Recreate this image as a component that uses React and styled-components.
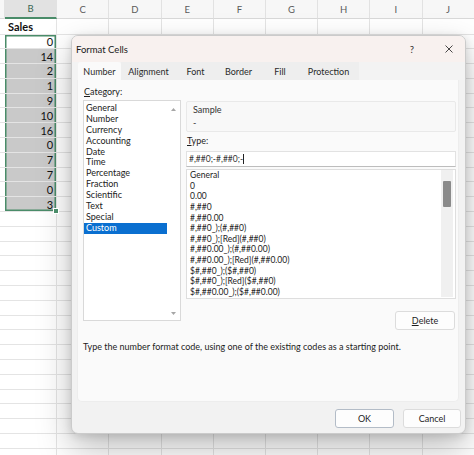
import React from "react";
import styled, { createGlobalStyle } from "styled-components";

const GlobalStyle = createGlobalStyle`
  html, body { margin: 0; padding: 0; background: #fff; }
  body { width: 474px; height: 455px; overflow: hidden; }
  #root { width: 474px; height: 455px; }
`;

const Screen = styled.div`
  position: relative;
  width: 474px;
  height: 455px;
  overflow: hidden;
  background: #fff;
  font-family: Lato, "Noto Sans", sans-serif;
`;

/* ---------- spreadsheet ---------- */
const Sheet = styled.div`
  display: flex;
  flex-direction: column;
`;

const SheetRow = styled.div`
  display: grid;
  grid-template-columns: 5px repeat(9, 52.2px);
  height: ${(p) => p.$h}px;
  flex: none;
`;

const HeaderCell = styled.div`
  box-sizing: border-box;
  display: flex;
  align-items: center;
  justify-content: center;
  background: ${(p) => (p.$active ? "#e2e2e2" : "#f7f7f7")};
  border-right: 1px solid #e2e2e2;
  border-bottom: ${(p) => (p.$active ? "2px solid #4a8c69" : "1px solid #d9d9d9")};
  color: ${(p) => (p.$active ? "#3a6652" : "#5a5a5a")};
  font-size: 9.5px;
`;

const selShadow = (p) => {
  if (!p.$sel) return "none";
  const c = "#4a8c69";
  const s = [`inset 1.5px 0 0 ${c}`, `inset -1.5px 0 0 ${c}`];
  if (p.$first) s.push(`inset 0 1.5px 0 ${c}`);
  if (p.$last) s.push(`inset 0 -1.5px 0 ${c}`);
  return s.join(", ");
};

const Cell = styled.div`
  position: relative;
  box-sizing: border-box;
  border-right: 1px solid #e4e4e4;
  border-bottom: 1px solid #e4e4e4;
  display: flex;
  align-items: center;
  justify-content: ${(p) => (p.$num ? "flex-end" : "flex-start")};
  padding: 0 3px;
  font-size: 11px;
  font-weight: ${(p) => (p.$bold ? 700 : 400)};
  color: #111;
  background: ${(p) => (p.$sel && !p.$first ? "#c9c9c9" : "#fff")};
  box-shadow: ${selShadow};
`;

const FillHandle = styled.span`
  position: absolute;
  right: -3px;
  bottom: -3px;
  width: 4px;
  height: 4px;
  background: #4a8c69;
  border: 1px solid #fff;
  z-index: 2;
`;

/* ---------- dialog ---------- */
const Dialog = styled.div`
  position: absolute;
  left: 71px;
  top: 35px;
  width: 395px;
  height: 399px;
  box-sizing: border-box;
  background: #f2f2f2;
  border: 1px solid #cbcbcb;
  border-radius: 7px;
  box-shadow: 0 14px 34px rgba(0, 0, 0, 0.26), 0 2px 8px rgba(0, 0, 0, 0.12);
  display: flex;
  flex-direction: column;
  overflow: hidden;
  font-family: Lato, "Noto Sans", sans-serif;
  font-size: 9px;
  color: #1d1d1d;
`;

const TitleBar = styled.div`
  height: 26px;
  flex: none;
  display: flex;
  align-items: center;
  justify-content: space-between;
  background: #f8f1ef;
  padding-left: 4px;
`;

const Title = styled.span`
  font-size: 9.5px;
  color: #1a1a1a;
`;

const TitleActions = styled.div`
  display: flex;
  align-items: center;
  gap: 31px;
  padding-right: 12px;
`;

const HelpGlyph = styled.span`
  font-size: 9.5px;
  color: #333;
`;

const CloseIcon = () => (
  <svg width="8" height="8" viewBox="0 0 8 8">
    <path d="M0.5 0.5 L7.5 7.5 M7.5 0.5 L0.5 7.5" stroke="#333" strokeWidth="0.9" fill="none" />
  </svg>
);

const TabStrip = styled.div`
  height: 18px;
  flex: none;
  display: flex;
  padding-left: 6px;
  background: #f3f3f3;
`;

const Tab = styled.div`
  width: ${(p) => p.$w}px;
  display: flex;
  align-items: center;
  justify-content: center;
  background: ${(p) => (p.$active ? "#fafafa" : "#eeeeee")};
  border-radius: ${(p) => (p.$active ? "3px 3px 0 0" : "0")};
  color: #2a2a2a;
  font-size: 9px;
`;

const Panel = styled.div`
  flex: none;
  height: 322px;
  box-sizing: border-box;
  margin: 0 6px 0 5px;
  background: #fafafa;
  border: 1px solid #ededed;
  border-top: none;
  border-radius: 0 0 5px 5px;
  padding: 6px 0 0 5px;
  display: flex;
  flex-direction: column;
`;

const PanelGrid = styled.div`
  display: grid;
  grid-template-columns: 98px 270px;
  grid-template-rows: 14px auto;
  column-gap: 5px;
`;

const FieldLabel = styled.div`
  line-height: 12px;
  font-size: 9px;
  color: #1d1d1d;
  margin-left: ${(p) => p.$indent || 0}px;
`;

const ListBox = styled.div`
  grid-column: 1;
  grid-row: 2;
  height: 221px;
  box-sizing: border-box;
  background: #fff;
  border: 1px solid #d9d9d9;
  display: flex;
`;

const ListItems = styled.div`
  flex: 1;
  padding-top: 2px;
  overflow: hidden;
`;

const ListItem = styled.div`
  height: ${(p) => p.$h || 10.9}px;
  line-height: ${(p) => p.$h || 10.9}px;
  padding-left: 2px;
  font-size: ${(p) => p.$size || 9}px;
  white-space: nowrap;
  background: ${(p) => (p.$selected ? "#0a6fd0" : "transparent")};
  color: ${(p) => (p.$selected ? "#fff" : "#222")};
`;

const ArrowRail = styled.div`
  width: 13px;
  display: flex;
  flex-direction: column;
  align-items: center;
  justify-content: space-between;
  padding: 7px 0 5px;
`;

const Arrow = ({ down }) => (
  <svg width="5" height="3" viewBox="0 0 5 3">
    <path d={down ? "M0 0 L5 0 L2.5 3 Z" : "M0 3 L5 3 L2.5 0 Z"} fill="#a6a6a6" />
  </svg>
);

const RightColumn = styled.div`
  grid-column: 2;
  grid-row: 2;
  display: flex;
  flex-direction: column;
`;

const SampleBox = styled.div`
  margin-top: 1px;
  height: 31px;
  box-sizing: border-box;
  border: 1px solid #e9e9e9;
  border-radius: 2px;
  background: #f8f8f8;
  padding: 3px 6px 0;
  display: flex;
  flex-direction: column;
  gap: 3px;
`;

const SampleLine = styled.div`
  line-height: 10px;
  font-size: 9px;
  color: #333;
`;

const TypeLabel = styled(FieldLabel)`
  margin-top: 3px;
  margin-left: 1px;
`;

const TextInput = styled.div`
  margin-top: 4px;
  height: 16px;
  box-sizing: border-box;
  background: #fff;
  border: 1px solid #e2e2e2;
  border-bottom-color: #bdbdbd;
  display: flex;
  align-items: center;
  padding-left: 2px;
  font-size: 8.5px;
  color: #333;
`;

const Caret = styled.span`
  width: 1px;
  height: 10px;
  background: #222;
`;

const FormatList = styled.div`
  margin-top: 2px;
  height: 130px;
  box-sizing: border-box;
  background: #fff;
  border: 1px solid #dedede;
  display: flex;
`;

const FormatItems = styled.div`
  flex: 1;
  overflow: hidden;
  padding-left: 1px;
`;

const Track = styled.div`
  width: 12px;
  margin: 0 2px 1px 0;
  background: #f0f0f0;
  padding-top: 11px;
  display: flex;
  justify-content: center;
  align-items: flex-start;
`;

const Thumb = styled.div`
  width: 8px;
  height: 26px;
  background: #8a8a8a;
  border-radius: 1px;
`;

const Button = styled.div`
  width: ${(p) => p.$w}px;
  height: 19px;
  box-sizing: border-box;
  background: #fdfdfd;
  border: 1px solid ${(p) => (p.$default ? "#b3bcc7" : "#dcdcdc")};
  border-radius: 3px;
  display: flex;
  align-items: center;
  justify-content: center;
  font-size: 9px;
  color: #1d1d1d;
  flex: none;
`;

const DeleteButton = styled(Button)`
  margin-top: 12px;
  align-self: flex-end;
  margin-right: 1px;
`;

const Description = styled.div`
  margin-top: 11px;
  line-height: 12px;
  font-size: 9px;
  color: #1d1d1d;
`;

const Footer = styled.div`
  flex: 1;
  display: flex;
  justify-content: flex-end;
  align-items: flex-start;
  gap: 9px;
  padding: 7px 4px 0 0;
`;

const categories = [
  "General", "Number", "Currency", "Accounting", "Date", "Time",
  "Percentage", "Fraction", "Scientific", "Text", "Special", "Custom",
];

const formats = [
  "General", "0", "0.00", "#,##0", "#,##0.00", "#,##0_);(#,##0)",
  "#,##0_);[Red](#,##0)", "#,##0.00_);(#,##0.00)", "#,##0.00_);[Red](#,##0.00)",
  "$#,##0_);($#,##0)", "$#,##0_);[Red]($#,##0)", "$#,##0.00_);($#,##0.00)",
];

const tabs = [
  ["Number", 43], ["Alignment", 55], ["Font", 39],
  ["Border", 47], ["Fill", 36], ["Protection", 61],
];

const COLS = ["A", "B", "C", "D", "E", "F", "G", "H", "I", "J"];
const values = [0, 14, 2, 1, 9, 10, 16, 0, 7, 7, 0, 3];

export default function App() {
  const rows = [];
  rows.push(
    <SheetRow key="h" $h={19}>
      {COLS.map((c) => (
        <HeaderCell key={c} $active={c === "B"}>{c === "A" ? "" : c}</HeaderCell>
      ))}
    </SheetRow>
  );
  for (let r = 0; r < 31; r++) {
    const isSel = r >= 1 && r <= 12;
    rows.push(
      <SheetRow key={r} $h={r === 0 ? 15.5 : 14.8}>
        {COLS.map((c) => {
          if (c === "B") {
            if (r === 0) return <Cell key={c} $bold>Sales</Cell>;
            if (isSel)
              return (
                <Cell key={c} $num $sel $first={r === 1} $last={r === 12}>
                  {values[r - 1]}
                  {r === 12 && <FillHandle />}
                </Cell>
              );
          }
          return <Cell key={c} />;
        })}
      </SheetRow>
    );
  }

  return (
    <Screen>
      <GlobalStyle />
      <Sheet>{rows}</Sheet>

      <Dialog>
        <TitleBar>
          <Title>Format Cells</Title>
          <TitleActions>
            <HelpGlyph>?</HelpGlyph>
            <CloseIcon />
          </TitleActions>
        </TitleBar>

        <TabStrip>
          {tabs.map(([t, w]) => (
            <Tab key={t} $w={w} $active={t === "Number"}>{t}</Tab>
          ))}
        </TabStrip>

        <Panel>
          <PanelGrid>
            <FieldLabel $indent={1}><u>C</u>ategory:</FieldLabel>
            <ListBox>
              <ListItems>
                {categories.map((c) => (
                  <ListItem key={c} $selected={c === "Custom"}>{c}</ListItem>
                ))}
              </ListItems>
              <ArrowRail>
                <Arrow />
                <Arrow down />
              </ArrowRail>
            </ListBox>
            <RightColumn>
              <SampleBox>
                <SampleLine>Sample</SampleLine>
                <SampleLine>-</SampleLine>
              </SampleBox>
              <TypeLabel><u>T</u>ype:</TypeLabel>
              <TextInput>
                #,##0;-#,##0;-
                <Caret />
              </TextInput>
              <FormatList>
                <FormatItems>
                  {formats.map((f) => (
                    <ListItem key={f} $size={8.5} $h={10.65}>{f}</ListItem>
                  ))}
                </FormatItems>
                <Track>
                  <Thumb />
                </Track>
              </FormatList>
              <DeleteButton $w={60}><u>D</u>elete</DeleteButton>
            </RightColumn>
          </PanelGrid>
          <Description>
            Type the number format code, using one of the existing codes as a starting point.
          </Description>
        </Panel>

        <Footer>
          <Button $w={59} $default>OK</Button>
          <Button $w={58}>Cancel</Button>
        </Footer>
      </Dialog>
    </Screen>
  );
}
